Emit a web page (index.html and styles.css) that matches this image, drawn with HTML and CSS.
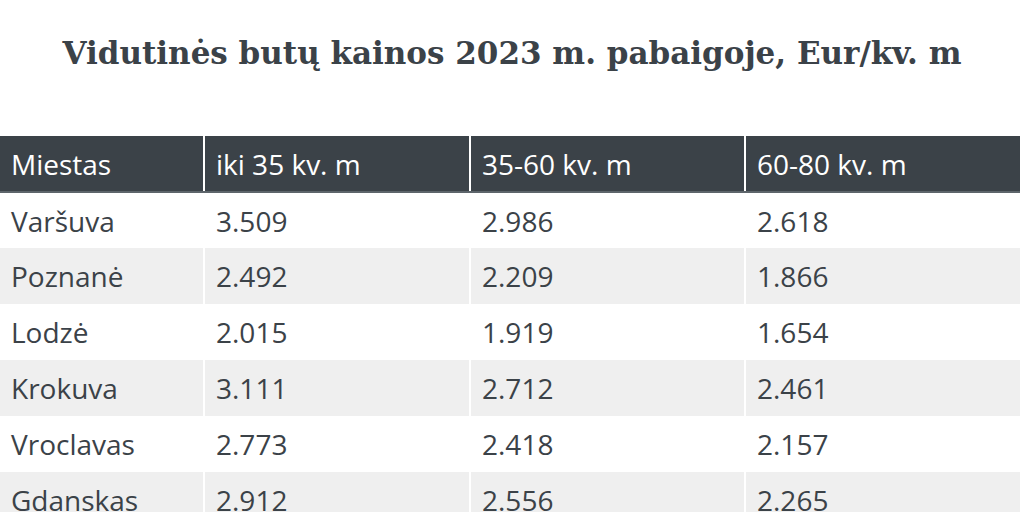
FILE: index.html
```html
<!DOCTYPE html>
<html lang="lt">
<head>
  <meta charset="UTF-8">
  <title>Vidutinės butų kainos</title>
  <link rel="stylesheet" href="styles.css">
</head>
<body>

  <h1>Vidutinės butų kainos 2023 m. pabaigoje, Eur/kv. m</h1>

  <table class="prices">
    <thead>
      <tr>
        <th class="city">Miestas</th>
        <th class="c1">iki 35 kv. m</th>
        <th class="c2">35-60 kv. m</th>
        <th class="c3">60-80 kv. m</th>
      </tr>
    </thead>
    <tbody>
      <tr><td>Varšuva</td><td>3.509</td><td>2.986</td><td>2.618</td></tr>
      <tr><td>Poznanė</td><td>2.492</td><td>2.209</td><td>1.866</td></tr>
      <tr><td>Lodzė</td><td>2.015</td><td>1.919</td><td>1.654</td></tr>
      <tr><td>Krokuva</td><td>3.111</td><td>2.712</td><td>2.461</td></tr>
      <tr><td>Vroclavas</td><td>2.773</td><td>2.418</td><td>2.157</td></tr>
      <tr><td>Gdanskas</td><td>2.912</td><td>2.556</td><td>2.265</td></tr>
    </tbody>
  </table>

</body>
</html>
```

FILE: styles.css
```css
body {
  margin: 0;
  background: #fff;
  color: #3b4248;
  font-family: "Open Sans", sans-serif;
}

h1 {
  font-family: "DejaVu Serif", serif;
  font-weight: bold;
  font-size: 31px;
  text-align: center;
  margin: 35px 0 0;
  height: 101px;
  color: #3b4248;
}

.prices {
  width: 1020px;
  border-collapse: collapse;
  table-layout: fixed;
}

.prices th,
.prices td {
  height: 56px;
  padding: 0 10px 0 11px;
  font-size: 28px;
  font-weight: 400;
  text-align: left;
  border-left: 2px solid #fff;
  box-sizing: border-box;
}

.prices th:first-child,
.prices td:first-child {
  border-left: none;
}

.prices th {
  background: #3b4248;
  color: #fff;
  border-bottom: 2px solid #5d656b;
}

.city { width: 204px; }
.c1 { width: 266px; }
.c2 { width: 275px; }
.c3 { width: 275px; }

.prices tbody tr:nth-child(even) td {
  background: #efefef;
}
```
